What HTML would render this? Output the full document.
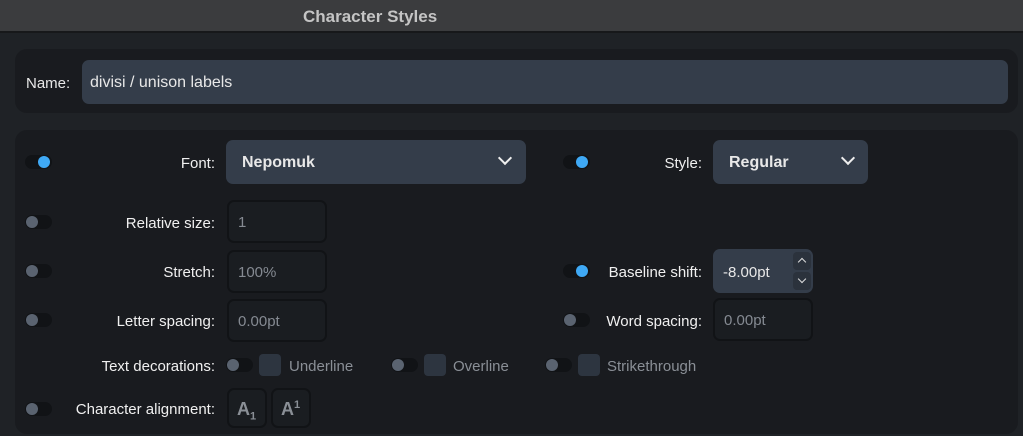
<!DOCTYPE html>
<html><head><style>
*{box-sizing:border-box;margin:0;padding:0}
body{width:1023px;height:436px;background:#1f2226;font-family:"Liberation Sans",sans-serif;position:relative;overflow:hidden;color:#e8e8e8}
.a{position:absolute}
.title{left:0;top:0;width:1023px;height:33px;background:#3b3c3e;border-bottom:2px solid #17181a}
.title span{position:absolute;left:303px;top:7px;font-size:17px;font-weight:bold;color:#c4c4c4}
.panel{background:#191b1f;border-radius:12px}
.lbl{font-size:15px;color:#f0f0f0;text-align:right;width:200px;left:15px}
.in{background:#343d4a;border-radius:7px}
.emp{background:#1a1d21;border:2px solid #111316;border-radius:7px;color:#858a92;font-size:15px;padding:12px 0 0 9px}
.tg{width:27px;height:14px;border-radius:7px;background:#111316}
.tg i{position:absolute;top:1px;width:12px;height:12px;border-radius:6px;background:#5a6370;left:1px}
.tg.on i{background:#3fa9f5;left:13px}
.cb{width:22px;height:22px;border-radius:4px;background:#2d3540}
.dec{font-size:15px;color:#8a8f96}
.chev{position:absolute;width:10px;height:10px;border-right:2px solid #eee;border-bottom:2px solid #eee;transform:rotate(45deg)}
.ab{width:40px;height:40px;border:2px solid #111316;border-radius:7px;background:#1a1d21;color:#8a8f96;font-weight:bold;font-size:18px;padding:9px 0 0 8px}
</style></head><body>
<div class="a title"><span>Character Styles</span></div>
<div class="a panel" style="left:15px;top:49px;width:1003px;height:64px"></div>
<div class="a" style="left:26px;top:75px;font-size:15px">Name:</div>
<div class="a in" style="left:82px;top:60px;width:926px;height:44px"></div>
<div class="a" style="left:90px;top:74px;font-size:16px">divisi / unison labels</div>

<div class="a panel" style="left:15px;top:130px;width:1003px;height:304px"></div>

<div class="a tg on" style="left:25px;top:155px"><i></i></div>
<div class="a lbl" style="top:155px">Font:</div>
<div class="a in" style="left:226px;top:140px;width:300px;height:44px"></div>
<div class="a" style="left:242px;top:154px;font-size:16px;font-weight:bold">Nepomuk</div>
<div class="chev" style="left:500px;top:153px"></div>

<div class="a tg on" style="left:563px;top:155px"><i></i></div>
<div class="a lbl" style="top:155px;left:502px">Style:</div>
<div class="a in" style="left:713px;top:140px;width:155px;height:44px"></div>
<div class="a" style="left:729px;top:154px;font-size:16px;font-weight:bold">Regular</div>
<div class="chev" style="left:843px;top:153px"></div>

<div class="a tg" style="left:25px;top:215px"><i></i></div>
<div class="a lbl" style="top:215px">Relative size:</div>
<div class="a emp" style="left:227px;top:200px;width:100px;height:43px">1</div>

<div class="a tg" style="left:25px;top:264px"><i></i></div>
<div class="a lbl" style="top:264px">Stretch:</div>
<div class="a emp" style="left:227px;top:250px;width:100px;height:43px">100%</div>

<div class="a tg on" style="left:563px;top:264px"><i></i></div>
<div class="a lbl" style="top:264px;left:502px">Baseline shift:</div>
<div class="a in" style="left:713px;top:249px;width:100px;height:44px"></div>
<div class="a" style="left:723px;top:264px;font-size:15px">-8.00pt</div>
<div class="a" style="left:793px;top:252px;width:18px;height:18px;background:#2b323c;border-radius:4px"></div>
<div class="a" style="left:793px;top:272px;width:18px;height:18px;background:#2b323c;border-radius:4px"></div>
<div class="a" style="left:799px;top:259px;width:6px;height:6px;border-left:1.5px solid #ddd;border-top:1.5px solid #ddd;transform:rotate(45deg)"></div>
<div class="a" style="left:799px;top:276px;width:6px;height:6px;border-right:1.5px solid #ddd;border-bottom:1.5px solid #ddd;transform:rotate(45deg)"></div>

<div class="a tg" style="left:25px;top:313px"><i></i></div>
<div class="a lbl" style="top:313px">Letter spacing:</div>
<div class="a emp" style="left:227px;top:299px;width:100px;height:43px">0.00pt</div>

<div class="a tg" style="left:563px;top:313px"><i></i></div>
<div class="a lbl" style="top:313px;left:502px">Word spacing:</div>
<div class="a emp" style="left:713px;top:298px;width:100px;height:43px">0.00pt</div>

<div class="a lbl" style="top:358px">Text decorations:</div>
<div class="a tg" style="left:226px;top:358px"><i></i></div>
<div class="a cb" style="left:259px;top:354px"></div>
<div class="a dec" style="left:289px;top:358px">Underline</div>
<div class="a tg" style="left:391px;top:358px"><i></i></div>
<div class="a cb" style="left:424px;top:354px"></div>
<div class="a dec" style="left:453px;top:358px">Overline</div>
<div class="a tg" style="left:545px;top:358px"><i></i></div>
<div class="a cb" style="left:578px;top:354px"></div>
<div class="a dec" style="left:607px;top:358px">Strikethrough</div>

<div class="a tg" style="left:25px;top:402px"><i></i></div>
<div class="a lbl" style="top:401px">Character alignment:</div>
<div class="a ab" style="left:227px;top:388px">A<sub style="font-size:11px">1</sub></div>
<div class="a ab" style="left:271px;top:388px">A<sup style="font-size:11px">1</sup></div>
</body></html>
